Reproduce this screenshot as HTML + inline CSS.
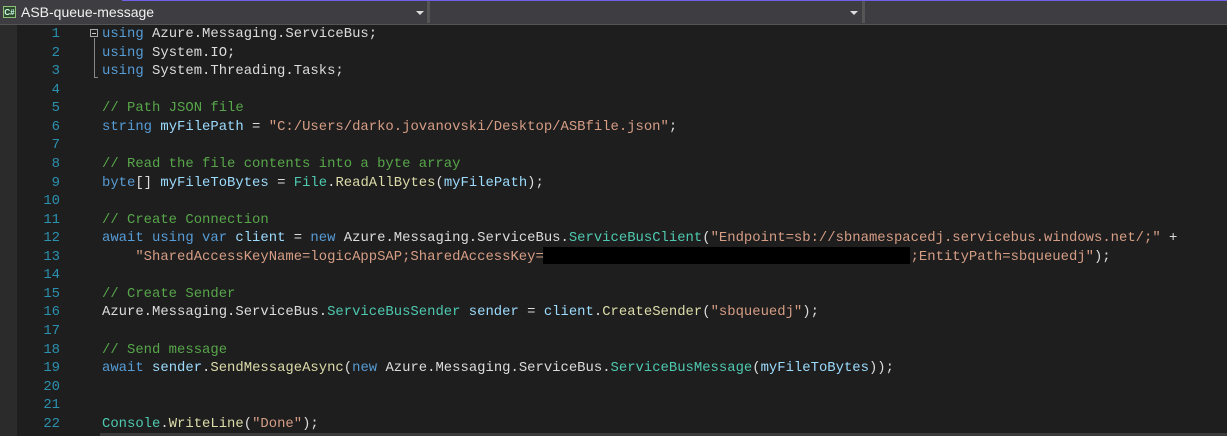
<!DOCTYPE html>
<html><head><style>
body{margin:0;width:1227px;height:436px;background:#1e1e1e;overflow:hidden;position:relative;font-family:"Liberation Mono",monospace}
.bar{position:absolute;top:0;left:0;width:1227px;height:24px;background:#3e3e42;border-bottom:1px solid #555}
.purple{position:absolute;top:0;left:122px;right:0;height:1px;background:#7160e8}
.dd{position:absolute;top:1px;height:22px;background:#3e3e42;border-right:3px solid #555}
.arrow{position:absolute;top:10px;width:0;height:0;border-left:4px solid transparent;border-right:4px solid transparent;border-top:4px solid #ddd}
.title{position:absolute;left:21px;top:3px;font:14px "Liberation Sans",sans-serif;color:#f1f1f1}
.cs{position:absolute;left:3px;top:5px;width:13px;height:12px;border:1px solid #8ec07c;background:#2d4a2d;color:#cfe;font:bold 8px "Liberation Sans",sans-serif;line-height:12px;text-align:center;box-sizing:border-box}
.strip{position:absolute;left:0;top:25px;width:17px;bottom:0;background:#2b2b2b}
.nums{position:absolute;top:25px;left:20px;width:40px;text-align:right;color:#2b91af;font-size:13.9px;line-height:18.57px;white-space:pre}
.code{position:absolute;top:25px;left:102px;color:#dcdcdc;font-size:13.9px;line-height:18.57px;white-space:pre}
.k{color:#569cd6}.t{color:#4ec9b0}.m{color:#dcdcaa}.s{color:#d69d85}.c{color:#57a64a}.v{color:#9cdcfe}
.red{position:absolute;left:543px;top:247px;width:367px;height:17px;background:#000}
.fold{position:absolute;left:90px;top:29px;width:8px;height:8px;border:1px solid #aaa;box-sizing:border-box}
.fold:after{content:"";position:absolute;left:1px;top:3px;width:4px;height:1px;background:#ccc}
.vl{position:absolute;left:94px;top:38px;width:1px;height:39px;background:#888}
.vl2{position:absolute;left:94px;top:77px;width:4px;height:1px;background:#888}
.bot{position:absolute;left:100px;top:433px;right:0;height:3px;background:#3a3a3a}
</style></head><body>
<div class="bar"></div><div class="purple"></div>
<div class="dd" style="left:0;width:427px"><div class="cs">C#</div><div class="title">ASB-queue-message</div><div class="arrow" style="left:416px"></div></div>
<div class="dd" style="left:430px;width:432px"><div class="arrow" style="left:420px"></div></div>
<div class="strip"></div>
<div class="nums">1
2
3
4
5
6
7
8
9
10
11
12
13
14
15
16
17
18
19
20
21
22</div>
<div class="fold"></div><div class="vl"></div><div class="vl2"></div>
<div class="code"><span class="k">using</span> Azure.Messaging.ServiceBus;
<span class="k">using</span> System.IO;
<span class="k">using</span> System.Threading.Tasks;

<span class="c">// Path JSON file</span>
<span class="k">string</span> <span class="v">myFilePath</span> = <span class="s">"C:/Users/darko.jovanovski/Desktop/ASBfile.json"</span>;

<span class="c">// Read the file contents into a byte array</span>
<span class="k">byte</span>[] <span class="v">myFileToBytes</span> = <span class="t">File</span>.<span class="m">ReadAllBytes</span>(<span class="v">myFilePath</span>);

<span class="c">// Create Connection</span>
<span class="k">await using var</span> <span class="v">client</span> = <span class="k">new</span> Azure.Messaging.ServiceBus.<span class="t">ServiceBusClient</span>(<span class="s">"Endpoint=sb://sbnamespacedj.servicebus.windows.net/;"</span> +
    <span class="s">"SharedAccessKeyName=logicAppSAP;SharedAccessKey=                                            ;EntityPath=sbqueuedj"</span>);

<span class="c">// Create Sender</span>
Azure.Messaging.ServiceBus.<span class="t">ServiceBusSender</span> <span class="v">sender</span> = <span class="v">client</span>.<span class="m">CreateSender</span>(<span class="s">"sbqueuedj"</span>);

<span class="c">// Send message</span>
<span class="k">await</span> <span class="v">sender</span>.<span class="m">SendMessageAsync</span>(<span class="k">new</span> Azure.Messaging.ServiceBus.<span class="t">ServiceBusMessage</span>(<span class="v">myFileToBytes</span>));


<span class="t">Console</span>.<span class="m">WriteLine</span>(<span class="s">"Done"</span>);</div>
<div class="red"></div>
<div class="bot"></div>
</body></html>
